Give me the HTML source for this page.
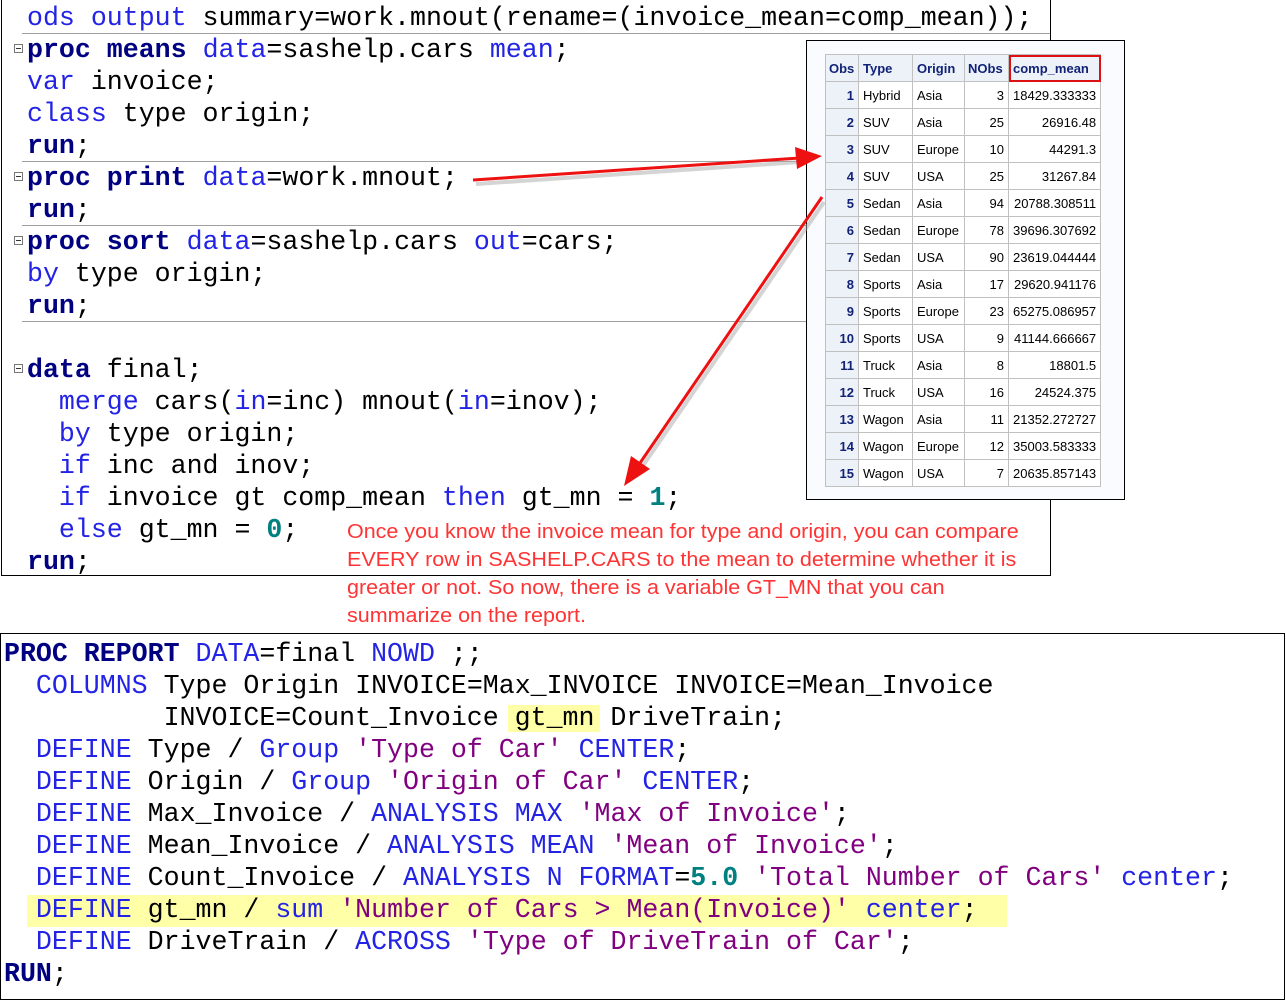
<!DOCTYPE html>
<html><head><meta charset="utf-8"><style>
body{margin:0;width:1286px;height:1000px;background:#fff;position:relative;overflow:hidden;font-family:"Liberation Mono",monospace;}
.c{position:absolute;white-space:pre;font-size:26.6px;line-height:32px;color:#000;}
.k{color:#2323e6}.b{color:#000080;font-weight:bold}.s{color:#800080}.n{color:#008080;font-weight:bold}
.sep{position:absolute;height:1px;background:#a0a0a0;left:22px;width:785px}
.fold{position:absolute;left:14px;width:7px;height:7px;border:1px solid #777;font-size:0}
.fold:after{content:"";position:absolute;left:1px;top:3px;width:5px;height:1px;background:#333}
table{position:absolute;left:825px;top:54px;border-collapse:collapse;font-family:"Liberation Sans",sans-serif;font-size:13px}
td,th{border:1px solid #c0c0c0;height:27px;padding:0 4px;box-sizing:border-box;}
th{background:#edf2f9;color:#112277;font-weight:bold;text-align:left}
td.o{background:#edf2f9;color:#112277;font-weight:bold;text-align:right}
td.r{text-align:right}
td{background:#fff;color:#000}
.ann{position:absolute;left:347px;color:#ff3333;font-family:"Liberation Sans",sans-serif;font-size:20px;line-height:28px;white-space:pre;transform:scaleX(1.075);transform-origin:0 0}
</style></head><body>
<div style="position:absolute;left:1px;top:-1px;width:1050px;height:577px;border:1px solid #000;box-sizing:border-box"></div>
<div style="position:absolute;left:0;top:633px;width:1285px;height:367px;border:1px solid #000;box-sizing:border-box"></div>
<div class="sep" style="top:33px;width:1028px"></div>
<div class="sep" style="top:161px"></div>
<div class="sep" style="top:225px"></div>
<div class="sep" style="top:321px"></div>
<div class="fold" style="top:44px"></div>
<div class="fold" style="top:172px"></div>
<div class="fold" style="top:236px"></div>
<div class="fold" style="top:364px"></div>
<div style="position:absolute;left:508px;top:705px;width:92px;height:27px;background:#ffffa8"></div>
<div style="position:absolute;left:27px;top:895px;width:980px;height:32px;background:#ffffa8"></div>
<div class="c" style="left:27px;top:2px"><span class="k">ods output</span> summary=work.mnout(rename=(invoice_mean=comp_mean));
<span class="b">proc means</span> <span class="k">data</span>=sashelp.cars <span class="k">mean</span>;
<span class="k">var</span> invoice;
<span class="k">class</span> type origin;
<span class="b">run</span>;
<span class="b">proc print</span> <span class="k">data</span>=work.mnout;
<span class="b">run</span>;
<span class="b">proc sort</span> <span class="k">data</span>=sashelp.cars <span class="k">out</span>=cars;
<span class="k">by</span> type origin;
<span class="b">run</span>;

<span class="b">data</span> final;
  <span class="k">merge</span> cars(<span class="k">in</span>=inc) mnout(<span class="k">in</span>=inov);
  <span class="k">by</span> type origin;
  <span class="k">if</span> inc and inov;
  <span class="k">if</span> invoice gt comp_mean <span class="k">then</span> gt_mn = <span class="n">1</span>;
  <span class="k">else</span> gt_mn = <span class="n">0</span>;
<span class="b">run</span>;</div>
<div class="c" style="left:4px;top:638px"><span class="b">PROC REPORT</span> <span class="k">DATA</span>=final <span class="k">NOWD</span> ;;
  <span class="k">COLUMNS</span> Type Origin INVOICE=Max_INVOICE INVOICE=Mean_Invoice
          INVOICE=Count_Invoice gt_mn DriveTrain;
  <span class="k">DEFINE</span> Type / <span class="k">Group</span> <span class="s">'Type of Car'</span> <span class="k">CENTER</span>;
  <span class="k">DEFINE</span> Origin / <span class="k">Group</span> <span class="s">'Origin of Car'</span> <span class="k">CENTER</span>;
  <span class="k">DEFINE</span> Max_Invoice / <span class="k">ANALYSIS MAX</span> <span class="s">'Max of Invoice'</span>;
  <span class="k">DEFINE</span> Mean_Invoice / <span class="k">ANALYSIS MEAN</span> <span class="s">'Mean of Invoice'</span>;
  <span class="k">DEFINE</span> Count_Invoice / <span class="k">ANALYSIS N FORMAT</span>=<span class="n">5.0</span> <span class="s">'Total Number of Cars'</span> <span class="k">center</span>;
  <span class="k">DEFINE</span> gt_mn / <span class="k">sum</span> <span class="s">'Number of Cars &gt; Mean(Invoice)'</span> <span class="k">center</span>;
  <span class="k">DEFINE</span> DriveTrain / <span class="k">ACROSS</span> <span class="s">'Type of DriveTrain of Car'</span>;
<span class="b">RUN</span>;</div>
<div class="ann" style="top:518px">Once you know the invoice mean for type and origin, you can compare
EVERY row in SASHELP.CARS to the mean to determine whether it is
greater or not. So now, there is a variable GT_MN that you can
summarize on the report.</div>
<div style="position:absolute;left:806px;top:40px;width:319px;height:460px;border:1px solid #000;box-sizing:border-box;background:#fafbfe"></div>
<table>
<tr><th style="width:33px;padding:0 3px">Obs</th><th style="width:54px">Type</th><th style="width:52px">Origin</th><th style="width:44px;padding:0 3px">NObs</th><th style="width:91px;outline:2px solid #dd1111;outline-offset:-2px">comp_mean</th></tr>
<tr><td class="o">1</td><td>Hybrid</td><td>Asia</td><td class="r">3</td><td class="r">18429.333333</td></tr>
<tr><td class="o">2</td><td>SUV</td><td>Asia</td><td class="r">25</td><td class="r">26916.48</td></tr>
<tr><td class="o">3</td><td>SUV</td><td>Europe</td><td class="r">10</td><td class="r">44291.3</td></tr>
<tr><td class="o">4</td><td>SUV</td><td>USA</td><td class="r">25</td><td class="r">31267.84</td></tr>
<tr><td class="o">5</td><td>Sedan</td><td>Asia</td><td class="r">94</td><td class="r">20788.308511</td></tr>
<tr><td class="o">6</td><td>Sedan</td><td>Europe</td><td class="r">78</td><td class="r">39696.307692</td></tr>
<tr><td class="o">7</td><td>Sedan</td><td>USA</td><td class="r">90</td><td class="r">23619.044444</td></tr>
<tr><td class="o">8</td><td>Sports</td><td>Asia</td><td class="r">17</td><td class="r">29620.941176</td></tr>
<tr><td class="o">9</td><td>Sports</td><td>Europe</td><td class="r">23</td><td class="r">65275.086957</td></tr>
<tr><td class="o">10</td><td>Sports</td><td>USA</td><td class="r">9</td><td class="r">41144.666667</td></tr>
<tr><td class="o">11</td><td>Truck</td><td>Asia</td><td class="r">8</td><td class="r">18801.5</td></tr>
<tr><td class="o">12</td><td>Truck</td><td>USA</td><td class="r">16</td><td class="r">24524.375</td></tr>
<tr><td class="o">13</td><td>Wagon</td><td>Asia</td><td class="r">11</td><td class="r">21352.272727</td></tr>
<tr><td class="o">14</td><td>Wagon</td><td>Europe</td><td class="r">12</td><td class="r">35003.583333</td></tr>
<tr><td class="o">15</td><td>Wagon</td><td>USA</td><td class="r">7</td><td class="r">20635.857143</td></tr>
</table>
<svg style="position:absolute;left:0;top:0" width="1286" height="1000">
<g stroke="#aaa" stroke-width="4" opacity="0.5" fill="none"><line x1="476" y1="184" x2="800" y2="162"/><line x1="824" y1="202" x2="640" y2="470"/></g>
<line x1="473" y1="180" x2="800" y2="158" stroke="#ee1111" stroke-width="3"/>
<polygon points="822,156 795,147 797,169" fill="#ee1111"/>
<line x1="822" y1="197" x2="640" y2="463" stroke="#ee1111" stroke-width="3"/>
<polygon points="624,486 631,456 650,469" fill="#ee1111"/>
</svg>
</body></html>
